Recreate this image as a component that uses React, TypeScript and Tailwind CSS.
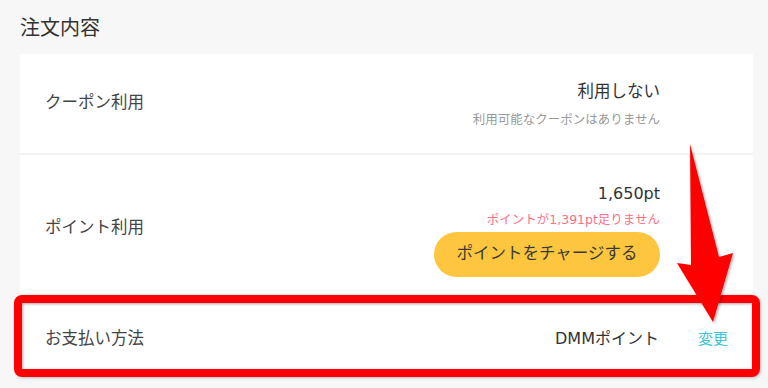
import React from "react";

const font = { fontFamily: '"DejaVu Sans", "Noto Sans CJK JP", sans-serif' };

function Arrow() {
  return (
    <svg className="absolute left-0 top-0 pointer-events-none" width="768" height="388" viewBox="0 0 768 388">
      <defs>
        <filter id="sh" x="-20%" y="-20%" width="140%" height="140%">
          <feDropShadow dx="1.5" dy="1.5" stdDeviation="1.2" floodColor="#000" floodOpacity="0.3" />
        </filter>
      </defs>
      <polygon
        points="690,144 719,257 733,253 713,322 677,263 691,265"
        fill="#ff0000"
        filter="url(#sh)"
      />
    </svg>
  );
}

export default function App() {
  return (
    <div className="relative w-[768px] h-[388px] overflow-hidden bg-[#f7f7f7] text-[#333]" style={font}>
      <h2 className="h-[54px] pl-5 pt-[13px] text-[20px] leading-[30px] text-[#333]">注文内容</h2>

      <div className="mx-5 w-[733px] bg-white">
        <div className="flex h-[101px] items-center justify-between border-b-2 border-[#f3f3f3] pl-[25px] pr-[93px]">
          <div className="text-[16.5px] text-[#444]">クーポン利用</div>
          <div className="flex flex-col items-end">
            <div className="text-[16.5px] leading-[28px] text-[#333]">利用しない</div>
            <div className="mt-[4px] text-[12.5px] leading-[20px] text-[#999]">利用可能なクーポンはありません</div>
          </div>
        </div>

        <div className="flex h-[140px] items-center justify-between border-b-2 border-[#f3f3f3] pl-[25px] pr-[93px] pt-[9px]">
          <div className="text-[16.5px] text-[#444]">ポイント利用</div>
          <div className="flex flex-col items-end">
            <div className="text-[16px] leading-[26px] text-[#333]">1,650pt</div>
            <div className="mt-[3px] text-[12.5px] leading-[20px] text-[#ff6f86]">ポイントが1,391pt足りません</div>
            <button className="mt-[2px] h-[45px] w-[226px] rounded-full bg-[#fec63f] text-[16.5px] text-[#3a3a3a]">
              ポイントをチャージする
            </button>
          </div>
        </div>

        <div className="flex h-[80px] items-center justify-between pl-[25px] pr-[25px] pt-[8px]">
          <div className="text-[16.5px] text-[#444]">お支払い方法</div>
          <div className="flex items-center">
            <div className="text-[16px] text-[#333]">DMMポイント</div>
            <a className="ml-[39px] text-[15px] text-[#3cc3da]">変更</a>
          </div>
        </div>
      </div>

      <div className="absolute left-[14px] top-[295px] h-[82px] w-[746px] rounded-[8px] border-[8px] border-[#ff0000] shadow-[inset_1px_1px_3px_rgba(0,0,0,0.35),1px_1px_3px_rgba(0,0,0,0.25)]" />
      <Arrow />
    </div>
  );
}
